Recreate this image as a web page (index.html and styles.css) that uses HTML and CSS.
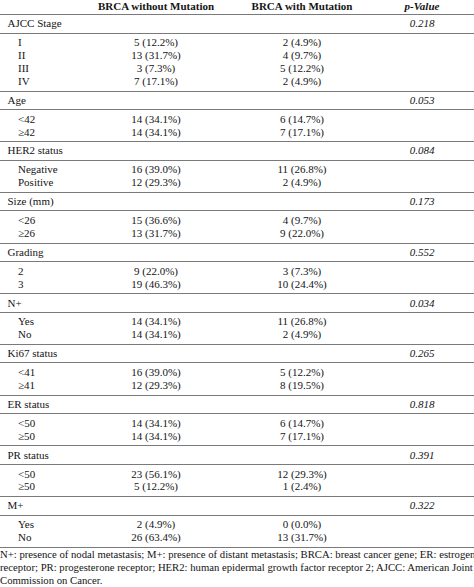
FILE: index.html
```html
<!DOCTYPE html>
<html>
<head>
<meta charset="utf-8">
<link rel="stylesheet" href="styles.css">
</head>
<body>
<div class="page">
<table class="data">
  <colgroup>
    <col class="c1"><col class="c2"><col class="c3"><col class="c4">
  </colgroup>
  <thead>
    <tr class="head">
      <th></th>
      <th>BRCA without Mutation</th>
      <th>BRCA with Mutation</th>
      <th class="pv">p-Value</th>
    </tr>
  </thead>
  <tbody>
    <tr class="cat"><td>AJCC Stage</td><td></td><td></td><td class="p">0.218</td></tr>
    <tr class="sub first"><td>I</td><td>5 (12.2%)</td><td>2 (4.9%)</td><td></td></tr>
    <tr class="sub"><td>II</td><td>13 (31.7%)</td><td>4 (9.7%)</td><td></td></tr>
    <tr class="sub"><td>III</td><td>3 (7.3%)</td><td>5 (12.2%)</td><td></td></tr>
    <tr class="sub last"><td>IV</td><td>7 (17.1%)</td><td>2 (4.9%)</td><td></td></tr>

    <tr class="cat"><td>Age</td><td></td><td></td><td class="p">0.053</td></tr>
    <tr class="sub first"><td>&lt;42</td><td>14 (34.1%)</td><td>6 (14.7%)</td><td></td></tr>
    <tr class="sub last"><td>≥42</td><td>14 (34.1%)</td><td>7 (17.1%)</td><td></td></tr>

    <tr class="cat"><td>HER2 status</td><td></td><td></td><td class="p">0.084</td></tr>
    <tr class="sub first"><td>Negative</td><td>16 (39.0%)</td><td>11 (26.8%)</td><td></td></tr>
    <tr class="sub last"><td>Positive</td><td>12 (29.3%)</td><td>2 (4.9%)</td><td></td></tr>

    <tr class="cat"><td>Size (mm)</td><td></td><td></td><td class="p">0.173</td></tr>
    <tr class="sub first"><td>&lt;26</td><td>15 (36.6%)</td><td>4 (9.7%)</td><td></td></tr>
    <tr class="sub last"><td>≥26</td><td>13 (31.7%)</td><td>9 (22.0%)</td><td></td></tr>

    <tr class="cat"><td>Grading</td><td></td><td></td><td class="p">0.552</td></tr>
    <tr class="sub first"><td>2</td><td>9 (22.0%)</td><td>3 (7.3%)</td><td></td></tr>
    <tr class="sub last"><td>3</td><td>19 (46.3%)</td><td>10 (24.4%)</td><td></td></tr>

    <tr class="cat"><td>N+</td><td></td><td></td><td class="p">0.034</td></tr>
    <tr class="sub first"><td>Yes</td><td>14 (34.1%)</td><td>11 (26.8%)</td><td></td></tr>
    <tr class="sub last"><td>No</td><td>14 (34.1%)</td><td>2 (4.9%)</td><td></td></tr>

    <tr class="cat"><td>Ki67 status</td><td></td><td></td><td class="p">0.265</td></tr>
    <tr class="sub first"><td>&lt;41</td><td>16 (39.0%)</td><td>5 (12.2%)</td><td></td></tr>
    <tr class="sub last"><td>≥41</td><td>12 (29.3%)</td><td>8 (19.5%)</td><td></td></tr>

    <tr class="cat"><td>ER status</td><td></td><td></td><td class="p">0.818</td></tr>
    <tr class="sub first"><td>&lt;50</td><td>14 (34.1%)</td><td>6 (14.7%)</td><td></td></tr>
    <tr class="sub last"><td>≥50</td><td>14 (34.1%)</td><td>7 (17.1%)</td><td></td></tr>

    <tr class="cat"><td>PR status</td><td></td><td></td><td class="p">0.391</td></tr>
    <tr class="sub first"><td>&lt;50</td><td>23 (56.1%)</td><td>12 (29.3%)</td><td></td></tr>
    <tr class="sub last"><td>≥50</td><td>5 (12.2%)</td><td>1 (2.4%)</td><td></td></tr>

    <tr class="cat"><td>M+</td><td></td><td></td><td class="p">0.322</td></tr>
    <tr class="sub first"><td>Yes</td><td>2 (4.9%)</td><td>0 (0.0%)</td><td></td></tr>
    <tr class="sub last"><td>No</td><td>26 (63.4%)</td><td>13 (31.7%)</td><td></td></tr>
  </tbody>
</table>
<p class="note">N+: presence of nodal metastasis; M+: presence of distant metastasis; BRCA: breast cancer gene; ER: estrogen<br>receptor; PR: progesterone receptor; HER2: human epidermal growth factor receptor 2; AJCC: American Joint<br>Commission on Cancer.</p>
</div>
</body>
</html>
```
FILE: styles.css
```css
html, body {
  margin: 0;
  padding: 0;
  background: #ffffff;
}
body {
  font-family: "Liberation Serif", "Times New Roman", serif;
  font-size: 11px;
  color: #141414;
}
.page {
  width: 474px;
  overflow: hidden;
}
.data {
  width: 474px;
  border-collapse: collapse;
  table-layout: fixed;
}
.c1 { width: 78px; }
.c2 { width: 156px; }
.c3 { width: 136px; }
.c4 { width: 104px; }

.data th,
.data td {
  padding: 0;
  line-height: 12.9px;
  text-align: center;
  white-space: nowrap;
}
.head th {
  font-weight: bold;
  line-height: 13px;
  padding: 0 0 1px;
  border-bottom: 1px solid #7a7a7a;
}
.head th.pv {
  font-style: italic;
}
.cat td {
  padding: 2.3px 0 2.3px;
  border-bottom: 1px solid #7a7a7a;
}
.cat td:first-child {
  text-align: left;
  padding-left: 7.5px;
}
.cat td.p {
  font-style: italic;
}
.sub td:first-child {
  text-align: left;
  padding-left: 18px;
}
.sub.first td {
  padding-top: 2.7px;
}
.sub.last td {
  padding-bottom: 2.7px;
  border-bottom: 1px solid #7a7a7a;
}
.note {
  margin: 0;
  font-family: "Liberation Serif", "Times New Roman", serif;
  font-size: 10.7px;
  line-height: 13px;
  white-space: nowrap;
}
```
